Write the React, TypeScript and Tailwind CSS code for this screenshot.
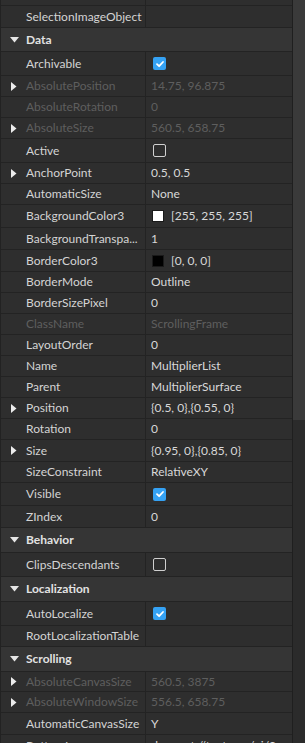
import React from 'react';

type Prop = {
  name: string;
  value?: string;
  h: number;
  kind?: 'text' | 'check' | 'uncheck' | 'color' | 'header';
  swatch?: string;
  arrow?: boolean;
  dim?: boolean;
};

const rows: Prop[] = [
  { name: 'SelectionImageObject', h: 22 },
  { name: 'Data', h: 24, kind: 'header' },
  { name: 'Archivable', h: 24, kind: 'check' },
  { name: 'AbsolutePosition', value: '14.75, 96.875', h: 21, arrow: true, dim: true },
  { name: 'AbsoluteRotation', value: '0', h: 21, dim: true },
  { name: 'AbsoluteSize', value: '560.5, 658.75', h: 21, arrow: true, dim: true },
  { name: 'Active', h: 24, kind: 'uncheck' },
  { name: 'AnchorPoint', value: '0.5, 0.5', h: 21, arrow: true },
  { name: 'AutomaticSize', value: 'None', h: 21 },
  { name: 'BackgroundColor3', value: '[255, 255, 255]', h: 23, kind: 'color', swatch: 'bg-white' },
  { name: 'BackgroundTranspa...', value: '1', h: 22 },
  { name: 'BorderColor3', value: '[0, 0, 0]', h: 22, kind: 'color', swatch: 'bg-black' },
  { name: 'BorderMode', value: 'Outline', h: 21 },
  { name: 'BorderSizePixel', value: '0', h: 21 },
  { name: 'ClassName', value: 'ScrollingFrame', h: 21, dim: true },
  { name: 'LayoutOrder', value: '0', h: 21 },
  { name: 'Name', value: 'MultiplierList', h: 21 },
  { name: 'Parent', value: 'MultiplierSurface', h: 21 },
  { name: 'Position', value: '{0.5, 0},{0.55, 0}', h: 21, arrow: true },
  { name: 'Rotation', value: '0', h: 21 },
  { name: 'Size', value: '{0.95, 0},{0.85, 0}', h: 22, arrow: true },
  { name: 'SizeConstraint', value: 'RelativeXY', h: 21 },
  { name: 'Visible', h: 23, kind: 'check' },
  { name: 'ZIndex', value: '0', h: 22 },
  { name: 'Behavior', h: 25, kind: 'header' },
  { name: 'ClipsDescendants', h: 24, kind: 'uncheck' },
  { name: 'Localization', h: 25, kind: 'header' },
  { name: 'AutoLocalize', h: 24, kind: 'check' },
  { name: 'RootLocalizationTable', h: 21 },
  { name: 'Scrolling', h: 25, kind: 'header' },
  { name: 'AbsoluteCanvasSize', value: '560.5, 3875', h: 20, arrow: true, dim: true },
  { name: 'AbsoluteWindowSize', value: '556.5, 658.75', h: 21, arrow: true, dim: true },
  { name: 'AutomaticCanvasSize', value: 'Y', h: 22 },
];

const Check = () => (
  <span className="w-[13px] h-[13px] rounded-[2px] bg-[#35a2f4] flex items-center justify-center">
    <svg width="10" height="10" viewBox="0 0 10 10">
      <path d="M2 5.2 L4.1 7.2 L8 3" fill="none" stroke="white" strokeWidth="1.8" strokeLinecap="round" strokeLinejoin="round" />
    </svg>
  </span>
);

const Row = ({ p }: { p: Prop }) => {
  if (p.kind === 'header') {
    return (
      <div style={{ height: p.h }} className="flex items-center bg-[#353535] border-b border-[#232323] shrink-0">
        <span className="w-[25px] flex justify-center pl-[1px]">
          <svg width="9" height="6" viewBox="0 0 9 6">
            <path d="M0 0 H9 L4.5 5.5 Z" fill="#e6e6e6" />
          </svg>
        </span>
        <span className="font-bold text-[#e2e2e2]">{p.name}</span>
      </div>
    );
  }
  const nameColor = p.dim ? 'text-[#5e5e5e]' : 'text-[#d4d4d4]';
  return (
    <div style={{ height: p.h }} className="flex bg-[#2e2e2e] border-b border-[#232323] shrink-0">
      <div className="w-[145px] flex items-center border-r border-[#232323] shrink-0 overflow-hidden">
        <span className="w-[25px] flex justify-center pl-[1px] shrink-0">
          {p.arrow && (
            <svg width="6" height="9" viewBox="0 0 6 9">
              <path d="M0 0 V9 L5.5 4.5 Z" fill="#ececec" />
            </svg>
          )}
        </span>
        <span className={`whitespace-nowrap ${nameColor}`}>{p.name}</span>
      </div>
      <div className={`flex-1 flex items-center pl-[5px] whitespace-nowrap overflow-hidden ${p.dim ? 'text-[#5e5e5e]' : 'text-[#d8d8d8]'}`}>
        {p.kind === 'check' && (
          <span className="ml-[2px]">
            <Check />
          </span>
        )}
        {p.kind === 'uncheck' && (
          <span className="ml-[2px] w-[13px] h-[13px] rounded-[2px] border border-[#d0d0d0]" />
        )}
        {p.kind === 'color' && (
          <>
            <span className={`ml-[1px] w-[12px] h-[12px] border border-[#1a1a1a] ${p.swatch}`} />
            <span className="ml-[7px]">{p.value}</span>
          </>
        )}
        {(!p.kind || p.kind === 'text') && <span>{p.value}</span>}
      </div>
    </div>
  );
};

export default function App() {
  return (
    <div className="w-[305px] h-[743px] overflow-hidden flex bg-[#2e2e2e] text-[12px] leading-none" style={{ fontFamily: 'Lato, "Open Sans", sans-serif' }}>
      <div className="w-[293px] flex flex-col border-l border-[#222] border-r border-r-[#1f1f1f]">
        <div className="h-[6px] flex bg-[#2e2e2e] border-b border-[#232323] shrink-0">
          <div className="w-[145px] border-r border-[#232323]" />
        </div>
        {rows.map((p) => (
          <Row key={p.name} p={p} />
        ))}
        <div className="h-[21px] flex bg-[#2e2e2e] shrink-0 items-start overflow-hidden">
          <div className="w-[145px] border-r border-[#232323] h-full shrink-0 flex items-start pt-[5px]">
            <span className="w-[25px] shrink-0" />
            <span className="text-[#d4d4d4]">BottomImage</span>
          </div>
          <div className="flex-1 pl-[5px] pt-[5px] whitespace-nowrap text-[#d8d8d8] overflow-hidden">
            rbxasset://textures/ui/Scroll/scroll-bottom.png
          </div>
        </div>
      </div>
      <div className="flex-1 flex flex-col">
        <div className="h-[420px] bg-[#3a3a3a]" />
        <div className="flex-1 bg-[#2b2b2b]" />
      </div>
    </div>
  );
}
